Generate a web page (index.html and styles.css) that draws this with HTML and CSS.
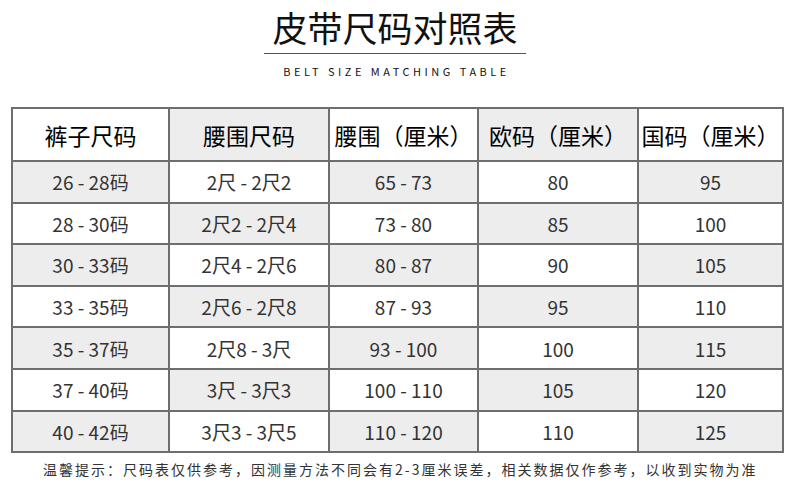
FILE: index.html
```html
<!DOCTYPE html>
<html lang="zh-CN">
<head>
<meta charset="utf-8">
<title>皮带尺码对照表</title>
<link rel="stylesheet" href="styles.css">
</head>
<body>
<header class="head">
  <h1 class="title">皮带尺码对照表</h1>
  <div class="rule"></div>
  <p class="sub">BELT SIZE MATCHING TABLE</p>
</header>
<table class="size">
  <colgroup>
    <col class="c1"><col class="c2"><col class="c3"><col class="c4"><col class="c5">
  </colgroup>
  <thead>
    <tr><th>裤子尺码</th><th class="g">腰围尺码</th><th>腰围（厘米）</th><th class="g">欧码（厘米）</th><th>国码（厘米）</th></tr>
  </thead>
  <tbody>
    <tr><td class="g">26 - 28码</td><td>2尺 - 2尺2</td><td class="g">65 - 73</td><td>80</td><td class="g">95</td></tr>
    <tr><td>28 - 30码</td><td class="g">2尺2 - 2尺4</td><td>73 - 80</td><td class="g">85</td><td>100</td></tr>
    <tr><td class="g">30 - 33码</td><td>2尺4 - 2尺6</td><td class="g">80 - 87</td><td>90</td><td class="g">105</td></tr>
    <tr><td>33 - 35码</td><td class="g">2尺6 - 2尺8</td><td>87 - 93</td><td class="g">95</td><td>110</td></tr>
    <tr><td class="g">35 - 37码</td><td>2尺8 - 3尺</td><td class="g">93 - 100</td><td>100</td><td class="g">115</td></tr>
    <tr><td>37 - 40码</td><td class="g">3尺 - 3尺3</td><td>100 - 110</td><td class="g">105</td><td>120</td></tr>
    <tr><td class="g">40 - 42码</td><td>3尺3 - 3尺5</td><td class="g">110 - 120</td><td>110</td><td class="g">125</td></tr>
  </tbody>
</table>
<p class="note">温馨提示：尺码表仅供参考，因测量方法不同会有2-3厘米误差，相关数据仅作参考，以收到实物为准</p>
</body>
</html>
```
FILE: styles.css
```css
html, body {
  margin: 0;
  padding: 0;
  background: #ffffff;
}
body {
  font-family: "Noto Sans CJK SC", "Noto Sans", sans-serif;
  color: #222;
  width: 790px;
}
.head {
  display: flex;
  flex-direction: column;
  align-items: center;
  padding-top: 9px;
}
.title {
  margin: 0;
  font-size: 35px;
  line-height: 35px;
  font-weight: 400;
  color: #111;
}
.rule {
  width: 262px;
  height: 1px;
  background: #555;
  margin-top: 9px;
}
.sub {
  margin: 10px 0 0;
  font-size: 11px;
  line-height: 14px;
  letter-spacing: 3.5px;
  color: #111;
  padding-left: 3px;
}
.size {
  margin: 29px 0 0 11px;
  border-collapse: collapse;
  table-layout: fixed;
  width: 771px;
}
.c1 { width: 157px; }
.c2 { width: 160px; }
.c3 { width: 149px; }
.c4 { width: 160px; }
.c5 { width: 145px; }
.size th, .size td {
  border: 2px solid #6e6e6e;
  text-align: center;
  padding: 0;
  background: #fff;
}
.size th {
  height: 51px;
  font-size: 23px;
  font-weight: 400;
  color: #000;
}
.size td {
  height: 39.6px;
  font-size: 19px;
  color: #333;
}
.size .g {
  background: #ededed;
}
.note {
  margin: 6px 0 0 43px;
  font-size: 14px;
  line-height: 20px;
  letter-spacing: 2px;
  color: #333;
}
```
